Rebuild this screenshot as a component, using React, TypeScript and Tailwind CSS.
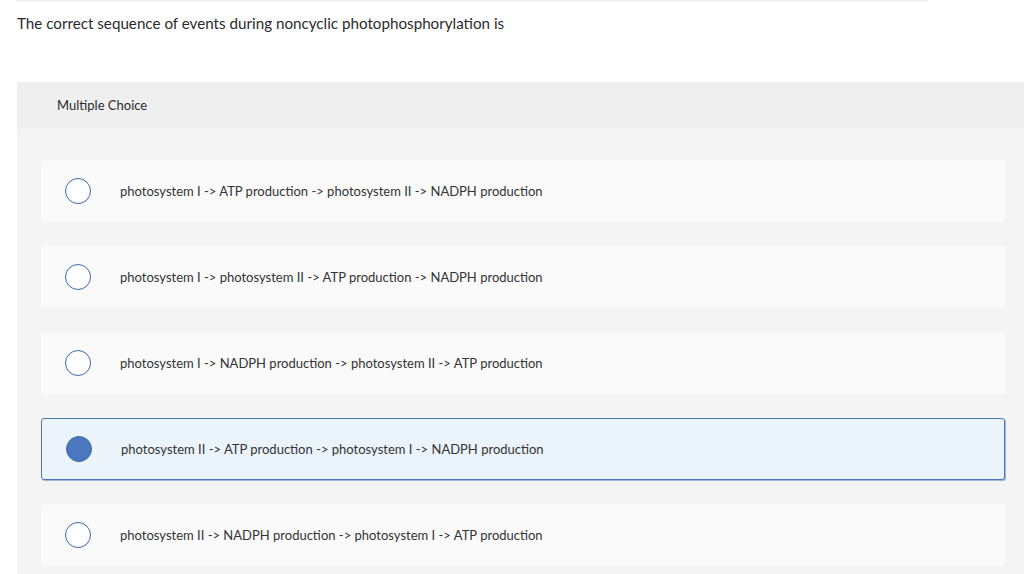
import React from 'react';

const options = [
  'photosystem I -> ATP production -> photosystem II -> NADPH production',
  'photosystem I -> photosystem II -> ATP production -> NADPH production',
  'photosystem I -> NADPH production -> photosystem II -> ATP production',
  'photosystem II -> ATP production -> photosystem I -> NADPH production',
  'photosystem II -> NADPH production -> photosystem I -> ATP production',
];

const selected = 3;

export default function App() {
  return (
    <div className="h-[574px] w-[1024px] overflow-hidden bg-white text-[#222]" style={{ fontFamily: 'Lato, "Open Sans", sans-serif' }}>
      <div className="ml-4 w-[912px] border-t-2 border-[#f2f2f2] pt-[11px]" />
      <p className="pl-[17px] text-[15.2px] leading-[20px] text-[#2b2b2b]">
        The correct sequence of events during noncyclic photophosphorylation is
      </p>
      <div className="ml-[17px] mt-[49px] rounded-tl-sm bg-[#f4f4f4]">
        <div className="flex h-[47px] items-center bg-[#efefef] pl-[40px] pt-[1px] text-[13px] text-[#2b2b2b]">
          Multiple Choice
        </div>
        <div className="flex flex-col gap-[24px] pb-6 pl-[24px] pr-[19px] pt-[31px]">
          {options.map((o, i) => {
            const on = i === selected;
            return (
              <div
                key={o}
                className={`flex h-[62px] items-center rounded-[3px] ${
                  on
                    ? 'border border-[#4a77bd] bg-[#ebf3fb] shadow-[1px_1px_0_#9fb5d8]'
                    : 'bg-[#fafafa]'
                }`}
              >
                <span
                  className={`ml-[24px] h-[26px] w-[26px] shrink-0 rounded-full border-[1.5px] border-[#3e6aa8] ${
                    on ? 'bg-[#4a77bd]' : 'bg-white'
                  }`}
                />
                <span className="ml-[29px] pt-[2px] text-[13px] text-[#333]">{o}</span>
              </div>
            );
          })}
        </div>
      </div>
    </div>
  );
}
